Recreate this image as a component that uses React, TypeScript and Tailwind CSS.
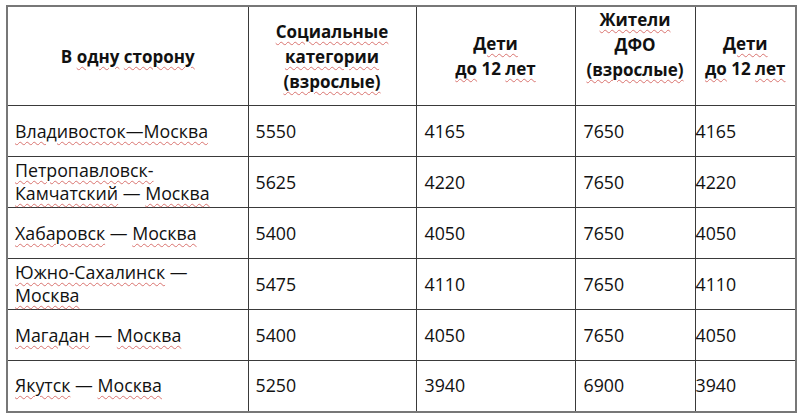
const rows = [
  { route: [["Владивосток—Москва"]], a: "5550", b: "4165", c: "7650", d: "4165" },
  { route: [["Петропавловск-"], ["Камчатский", " — ", "Москва"]], a: "5625", b: "4220", c: "7650", d: "4220" },
  { route: [["Хабаровск", " — ", "Москва"]], a: "5400", b: "4050", c: "7650", d: "4050" },
  { route: [["Южно-Сахалинск", " —"], ["Москва"]], a: "5475", b: "4110", c: "7650", d: "4110" },
  { route: [["Магадан", " — ", "Москва"]], a: "5400", b: "4050", c: "7650", d: "4050" },
  { route: [["Якутск", " — ", "Москва"]], a: "5250", b: "3940", c: "6900", d: "3940" },
];

function W({ children }: { children: React.ReactNode }) {
  return (
    <span className="underline decoration-wavy decoration-[#d9736f] decoration-1 underline-offset-[3px]">
      {children}
    </span>
  );
}

// parts at even index are underlined words, odd ones are plain separators
function Route({ lines }: { lines: string[][] }) {
  return (
    <>
      {lines.map((line, i) => (
        <div key={i}>
          {line.map((part, j) => (j % 2 === 0 ? <W key={j}>{part}</W> : <span key={j}>{part}</span>))}
        </div>
      ))}
    </>
  );
}

const cell = "border border-[#3a3a3a] align-middle";

export default function App() {
  return (
    <div className="w-[800px] h-[413px] bg-white pt-[5px] pl-[6px] text-[#111]" style={{ fontFamily: '"Open Sans", "Noto Sans", sans-serif' }}>
      <table className="border-collapse table-fixed w-[789px] text-[17.8px] leading-[23px] border-2 border-[#777]">
        <colgroup>
          <col className="w-[241px]" />
          <col className="w-[168px]" />
          <col className="w-[159px]" />
          <col className="w-[120px]" />
          <col className="w-[101px]" />
        </colgroup>
        <thead>
          <tr className="h-[99px] font-bold text-center text-[17px] leading-[25px]">
            <th className={cell}>
              В <W>одну</W> <W>сторону</W>
            </th>
            <th className={cell}>
              <div><W>Социальные</W></div>
              <div><W>категории</W></div>
              <div><W>(взрослые)</W></div>
            </th>
            <th className={cell}>
              <div><W>Дети</W></div>
              <div><W>до</W> 12 <W>лет</W></div>
            </th>
            <th className={`${cell} pb-[23px]`}>
              <div><W>Жители</W></div>
              <div>ДФО</div>
              <div><W>(взрослые)</W></div>
            </th>
            <th className={cell}>
              <div><W>Дети</W></div>
              <div><W>до</W> 12 <W>лет</W></div>
            </th>
          </tr>
        </thead>
        <tbody>
          {rows.map((r, i) => (
            <tr key={i} className="h-[51px]">
              <td className={`${cell} pl-[7px]`}>
                <Route lines={r.route} />
              </td>
              <td className={`${cell} pl-[7px]`}>{r.a}</td>
              <td className={`${cell} pl-[8px]`}>{r.b}</td>
              <td className={`${cell} pl-[8px]`}>{r.c}</td>
              <td className={`${cell} pl-0`}>{r.d}</td>
            </tr>
          ))}
        </tbody>
      </table>
    </div>
  );
}
